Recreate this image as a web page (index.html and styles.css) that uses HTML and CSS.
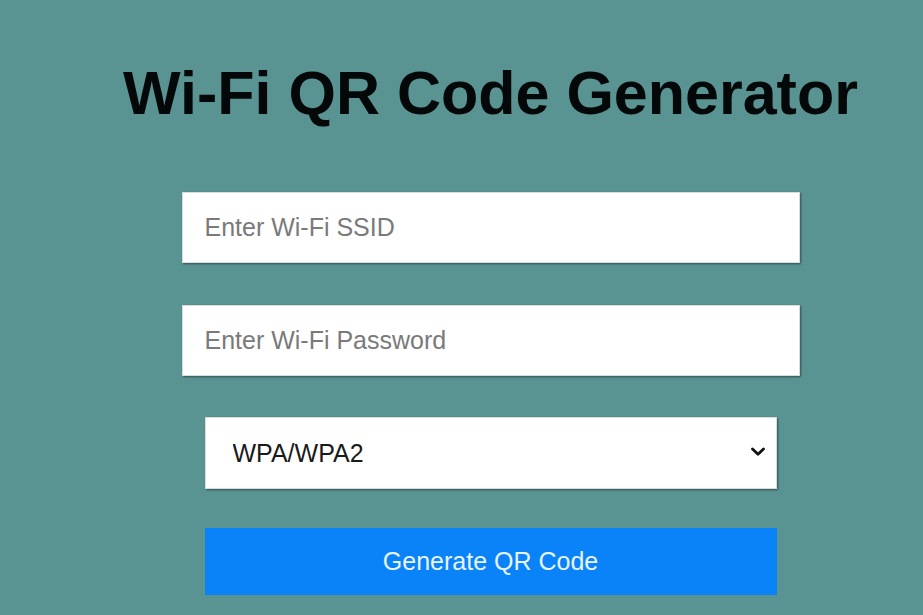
FILE: index.html
```html
<!DOCTYPE html>
<html lang="en">
<head>
    <meta charset="UTF-8">
    <meta name="viewport" content="width=device-width, initial-scale=1.0">
    <title>Wi-Fi QR Code Generator</title>
    <link rel="stylesheet" href="styles.css">
</head>
<body>
    <div class="container">
        <h1>Wi-Fi QR Code Generator</h1>

        <form class="wifi-form" onsubmit="return false;">
            <input type="text" id="ssid" placeholder="Enter Wi-Fi SSID">
            <input type="password" id="password" placeholder="Enter Wi-Fi Password">
            <div class="select-wrap">
                <select id="encryption">
                    <option value="WPA">WPA/WPA2</option>
                    <option value="WEP">WEP</option>
                    <option value="nopass">None</option>
                </select>
                <svg class="select-arrow" width="16" height="10" viewBox="0 0 16 10">
                    <path d="M2.5 2 L8 7.2 L13.5 2" fill="none" stroke="#111" stroke-width="2.8" stroke-linecap="round" stroke-linejoin="round"/>
                </svg>
            </div>
            <button type="submit">Generate QR Code</button>
        </form>
    </div>
</body>
</html>
```

FILE: styles.css
```css
body {
    margin: 0;
    padding: 0 0 0 58px;
    background-color: #599493;
    font-family: "Liberation Sans", Arial, sans-serif;
}

.container {
    display: flex;
    flex-direction: column;
    align-items: center;
}

h1 {
    margin: 63px 0 0;
    font-size: 61px;
    line-height: 61px;
    font-weight: bold;
    color: #050808;
    white-space: nowrap;
}

.wifi-form {
    width: 572px;
    margin-top: 68px;
    display: flex;
    flex-direction: column;
    align-items: center;
}

input {
    display: block;
    box-sizing: border-box;
    width: 618px;
    height: 71px;
    margin: 0 0 42px;
    padding: 0 22px;
    border: 1px solid #d8dcdc;
    box-shadow: 1px 1px 2px rgba(0, 0, 0, 0.45);
    background: #fff;
    font-family: "Liberation Sans", Arial, sans-serif;
    font-size: 25px;
    color: #333;
    outline: none;
}

#password {
    margin-bottom: 41px;
}

input::placeholder {
    color: #7a7a7a;
}

.select-wrap {
    position: relative;
    width: 100%;
    margin-bottom: 39px;
}

select {
    display: block;
    box-sizing: border-box;
    width: 100%;
    height: 72px;
    padding: 0 27px;
    border: 1px solid #d8dcdc;
    box-shadow: 1px 1px 2px rgba(0, 0, 0, 0.45);
    background: #fff;
    appearance: none;
    -webkit-appearance: none;
    font-family: "Liberation Sans", Arial, sans-serif;
    font-size: 25px;
    color: #1a1a1a;
    outline: none;
}

.select-arrow {
    position: absolute;
    right: 11px;
    top: 30px;
    pointer-events: none;
}

button {
    width: 100%;
    height: 67px;
    border: none;
    background-color: #0a82f8;
    color: #e6f4ff;
    font-family: "Liberation Sans", Arial, sans-serif;
    font-size: 25px;
    cursor: pointer;
}
```
